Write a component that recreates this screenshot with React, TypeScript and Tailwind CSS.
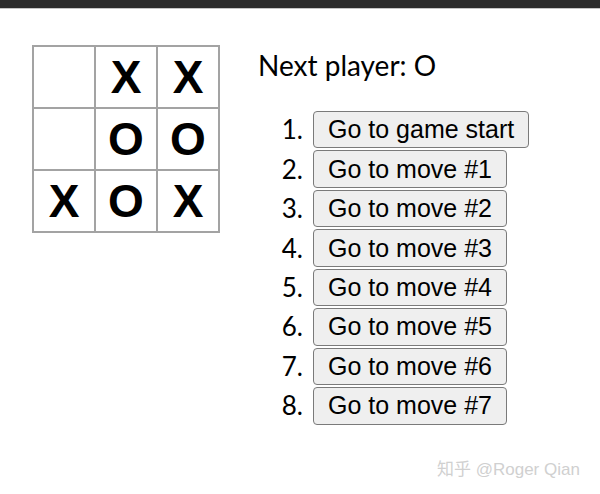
import React from "react";

const squares = ["", "X", "X", "", "O", "O", "X", "O", "X"];
const moves = [
  "Go to game start",
  "Go to move #1",
  "Go to move #2",
  "Go to move #3",
  "Go to move #4",
  "Go to move #5",
  "Go to move #6",
  "Go to move #7",
];

export default function App() {
  return (
    <div className="relative min-h-[494px] w-[600px] bg-white overflow-hidden">
      <div className="h-[9px] bg-[#2b2b2b] border-b border-[#c4c4c4]" />
      <div className="flex pl-[32px] pt-[36px]">
        <div className="grid grid-cols-[repeat(3,62px)] border-l-2 border-t-2 border-[#a3a3a3] self-start">
          {squares.map((s, i) => (
            <div
              key={i}
              className="h-[62px] w-[62px] border-r-2 border-b-2 border-[#a3a3a3] flex items-center justify-center text-[46px] font-bold text-black leading-none font-['Liberation_Sans',Arial,sans-serif]"
            >
              {s}
            </div>
          ))}
        </div>
        <div className="ml-[38px] font-['Lato',sans-serif] text-black">
          <div className="text-[28px] leading-[32px] mt-[4px]">Next player: O</div>
          <ol className="mt-[29px] flex flex-col">
            {moves.map((m, i) => (
              <li key={i} className="flex items-center h-[39.45px]">
                <span className="w-[55px] text-right text-[26px] pr-[10px]">{i + 1}.</span>
                <button className="h-[37.5px] px-[14px] rounded-[4px] border-[1.5px] border-[#7a7a7a] bg-[#efefef] text-[25px] leading-none text-black font-['Liberation_Sans',Arial,sans-serif]">
                  {m}
                </button>
              </li>
            ))}
          </ol>
        </div>
      </div>
      <div className="absolute left-[437px] top-[457px] text-[17px] text-[#d0d0d0] font-['Liberation_Sans','Noto_Sans_CJK_SC',sans-serif] [text-shadow:0_0_1px_#fff]">
        知乎 @Roger Qian
      </div>
    </div>
  );
}
